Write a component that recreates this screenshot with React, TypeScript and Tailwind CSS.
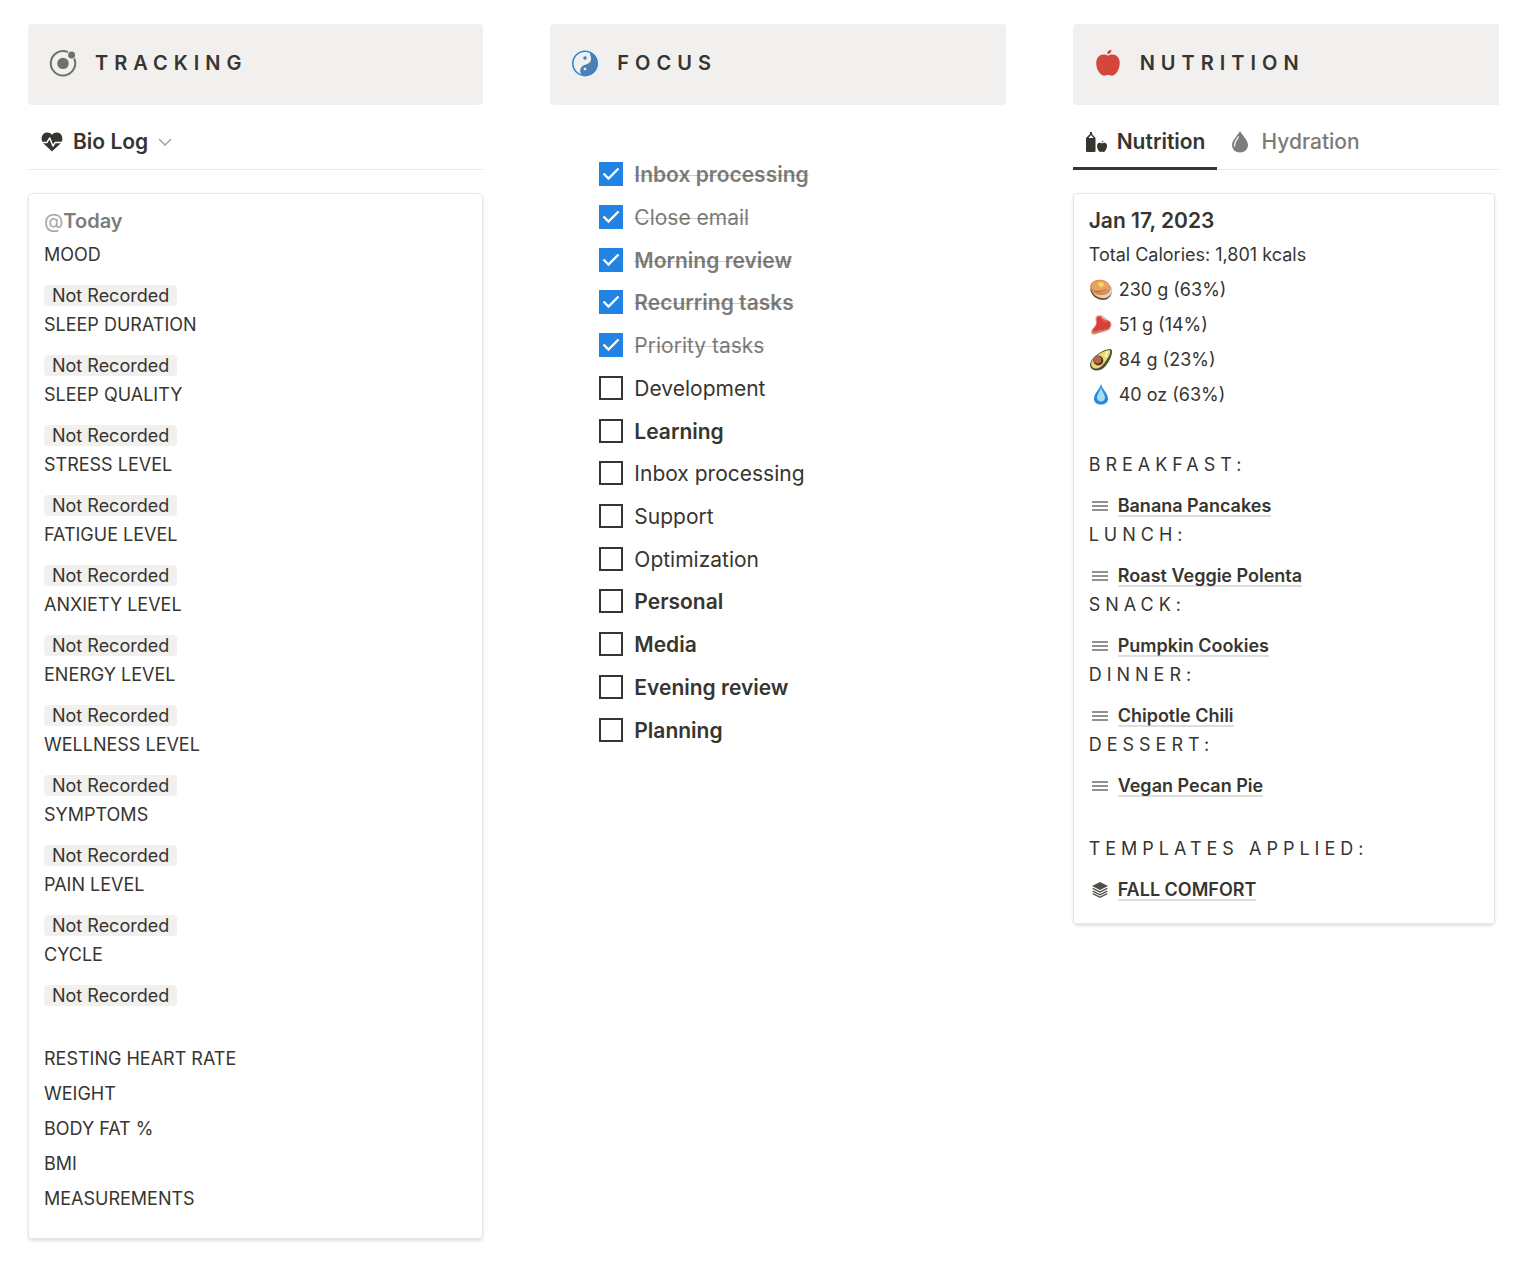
import { useState } from 'react'
import type { ReactNode } from 'react'
import { clsx } from 'clsx'

const METRICS = [
  'MOOD',
  'SLEEP DURATION',
  'SLEEP QUALITY',
  'STRESS LEVEL',
  'FATIGUE LEVEL',
  'ANXIETY LEVEL',
  'ENERGY LEVEL',
  'WELLNESS LEVEL',
  'SYMPTOMS',
  'PAIN LEVEL',
  'CYCLE',
]

const BODY_STATS = ['RESTING HEART RATE', 'WEIGHT', 'BODY FAT %', 'BMI', 'MEASUREMENTS']

const INITIAL_TASKS = [
  { label: 'Inbox processing', bold: true, done: true },
  { label: 'Close email', bold: false, done: true },
  { label: 'Morning review', bold: true, done: true },
  { label: 'Recurring tasks', bold: true, done: true },
  { label: 'Priority tasks', bold: false, done: true },
  { label: 'Development', bold: false, done: false },
  { label: 'Learning', bold: true, done: false },
  { label: 'Inbox processing', bold: false, done: false },
  { label: 'Support', bold: false, done: false },
  { label: 'Optimization', bold: false, done: false },
  { label: 'Personal', bold: true, done: false },
  { label: 'Media', bold: true, done: false },
  { label: 'Evening review', bold: true, done: false },
  { label: 'Planning', bold: true, done: false },
]

const MEALS = [
  { name: 'BREAKFAST:', recipe: 'Banana Pancakes' },
  { name: 'LUNCH:', recipe: 'Roast Veggie Polenta' },
  { name: 'SNACK:', recipe: 'Pumpkin Cookies' },
  { name: 'DINNER:', recipe: 'Chipotle Chili' },
  { name: 'DESSERT:', recipe: 'Vegan Pecan Pie' },
]

function OrbitIcon() {
  return (
    <svg viewBox="0 0 28 28" className="size-7" aria-hidden="true">
      <path d="M19 3.2A12.2 12.2 0 1 0 25.2 9.5" fill="none" stroke="#6f6f6b" strokeWidth="2" />
      <circle cx="14" cy="14.4" r="5.7" fill="#6f6f6b" />
      <circle cx="22.6" cy="6" r="3.5" fill="#6f6f6b" />
    </svg>
  )
}

function YinYangIcon() {
  return (
    <svg viewBox="0 0 28 28" className="size-7" aria-hidden="true">
      <circle cx="14" cy="14.4" r="12.2" fill="#f1f0ef" />
      <path d="M19 2.8A12.6 12.6 0 0 1 14 27C8.5 26.5 8 20.5 11 17.5C13.5 15 19.5 15.5 20 10.5C20.3 7.5 18.5 5.5 19 2.8Z" fill="#4f7fad" />
      <circle cx="14" cy="14.4" r="12.2" fill="none" stroke="#2b87dd" strokeWidth="1.6" />
      <circle cx="14" cy="9" r="1.8" fill="#2b87dd" />
      <circle cx="14" cy="20" r="1.9" fill="#f1f0ef" stroke="#2b87dd" />
    </svg>
  )
}

function AppleIcon() {
  return (
    <svg viewBox="0 0 28 28" className="size-7" aria-hidden="true">
      <path d="M14 6.8C16.5 5 21.5 5 24 8.2C27 12 25.8 19 23 23.3C20.8 26.6 18 27.2 16 26.3Q14 25.7 12 26.3C10 27.2 7.2 26.6 5 23.3C2.2 19 1 12 4 8.2C6.5 5 11.5 5 14 6.8Z" fill="#d5473d" />
      <path d="M13.3 5.2C13 2.5 14.5 1 17.3 0.8C17.5 3.5 16 5 13.3 5.2Z" fill="#d5473d" />
    </svg>
  )
}

function HeartPulseIcon() {
  return (
    <svg viewBox="0 0 24 22" className="h-5 w-[22px]" aria-hidden="true">
      <path d="M12 3C9.5 0 5 0 2.5 2.3C0 5 0 9 2 12L12 21.5L22 12C24 9 24 5 21.5 2.3C19 0 14.5 0 12 3Z" fill="#37352f" />
      <path d="M0 11.5H6.5L9.5 6.5L13 15.5L15.5 11.5H24" fill="none" stroke="#fff" strokeWidth="1.6" strokeLinejoin="round" />
    </svg>
  )
}

function GroceriesIcon() {
  return (
    <svg viewBox="0 0 22 22" className="size-[22px]" aria-hidden="true">
      <path d="M5 1H7V3L10.5 7V20Q10.5 21 9.5 21H2Q1 21 1 20V7L5 3Z" fill="#37352f" />
      <path d="M6 4L8.5 7H3.5Z" fill="#fff" />
      <path d="M17 12.4C18.5 11.4 20.5 11.5 21.6 13C22.6 15 21.5 18.5 20 20.3C19 21.4 18 20.8 17 20.8S15 21.4 14 20.3C12.5 18.5 11.5 15 12.5 13C13.5 11.5 15.5 11.4 17 12.4Z" fill="#37352f" />
      <path d="M16.6 11.6Q16.6 9.8 18.6 9.5Q18.5 11.5 16.6 11.6Z" fill="#37352f" />
    </svg>
  )
}

function DropIcon() {
  return (
    <svg viewBox="0 0 22 22" className="size-[22px]" aria-hidden="true">
      <path d="M11 0C13 4 19 9 19 14C19 18.5 15.5 21.5 11 21.5S3 18.5 3 14C3 9 9 4 11 0Z" fill="#7d7c78" />
      <path d="M9.3 6C7 9.5 5.3 11.5 5.5 15" fill="none" stroke="#e8e8e6" strokeWidth="1.5" strokeLinecap="round" />
    </svg>
  )
}

function PancakesIcon() {
  return (
    <svg viewBox="0 0 24 24" className="size-6" aria-hidden="true">
      <path d="M1 11C2.5 18 8 22 14 22C20 22 23.5 17 23 11L12 8Z" fill="#6d4a37" />
      <path d="M1.5 10C4 17 9 20.5 15 20.2C20 20 23.5 15 22.8 9Z" fill="#e8c9a0" />
      <path d="M9 18C15 20.5 22 15.5 22.8 9.5L23 14C21 19 15 21 9 18Z" fill="#d5d8dc" />
      <ellipse cx="11.3" cy="9.4" rx="10.3" ry="7.6" transform="rotate(8 11.3 9.4)" fill="#d98a4c" />
      <ellipse cx="11.5" cy="8.4" rx="9" ry="5.8" transform="rotate(8 11.5 8.4)" fill="#e5a466" />
      <path d="M8.5 5L13.5 4L15.5 7.5L11 9.2Z" fill="#f7d968" />
      <path d="M6 13Q11 14.5 17 11.5" fill="none" stroke="#bd6b35" strokeWidth="1.3" />
    </svg>
  )
}

function MeatIcon() {
  return (
    <svg viewBox="0 0 24 24" className="size-6" aria-hidden="true">
      <path d="M2 19C2 16 6 14 7 10C6 6 6 4 7.5 2.5L12.5 2L22 9C23.5 13 22 16 18 18C13 20 8 20 5.5 22C3 22 2 21 2 19Z" fill="#efb3a1" />
      <path d="M3.5 16.5C6.5 14 8.5 11 7.5 7C7 4 9 2.7 12 3.5C13.5 5 15 7 18 7.5C21.5 8 23 12 20.5 14.5C17 17.5 11 16.5 7.5 18.5C4.5 19.5 3 18 3.5 16.5Z" fill="#d63f3a" />
      <path d="M3 19Q5 20.5 8 19.5Q15 17 20.5 15.5" fill="none" stroke="#a86b54" strokeWidth="1.2" />
      <path d="M12 4Q13 8 18 9" fill="none" stroke="#eb7770" strokeWidth="1" />
    </svg>
  )
}

function AvocadoIcon() {
  return (
    <svg viewBox="0 0 24 24" className="size-6" aria-hidden="true">
      <path d="M21 1C24 1 23.5 6 21 11C18 17 14 23 7 22.5C2 22 0 18 1.5 14.5C4 8 13 2 21 1Z" fill="#4b5432" />
      <path d="M20.5 2C22.5 2.5 20.5 8 17.5 12C14.5 16.5 11 21 6.5 20.5C3 20 1.5 17.5 2.5 14C4.5 8.5 13.5 3 20.5 2Z" fill="#ead979" />
      <path d="M18.5 3.5Q15 9 18.5 8" fill="none" stroke="#f8f1b8" strokeWidth="2" />
      <circle cx="9.3" cy="12.5" r="5" fill="#583226" />
      <circle cx="8.6" cy="11.8" r="3.8" fill="#b56b43" />
    </svg>
  )
}

function WaterIcon() {
  return (
    <svg viewBox="0 0 24 24" className="size-6" aria-hidden="true">
      <path d="M12 1C13 6 19 10.5 19 15.5C19 19.5 16 21.5 12 21.5S5 19.500 5 15.500C5 10.500 11 6 12 1Z" fill="#268ae0" />
      <path d="M12 4C12.5 8 16 11 16 14.500C16 17 14 18.500 12 18.500S8 17 8 14.500C8 11 11.500 8 12 4Z" fill="#a9dcf7" />
    </svg>
  )
}

function LinesIcon() {
  return (
    <svg viewBox="0 0 16 10" className="h-2.5 w-4" aria-hidden="true">
      <path d="M0 1H16M0 5H16M0 9H16" stroke="#6f6e6a" strokeWidth="1.4" />
    </svg>
  )
}

function LayersIcon() {
  return (
    <svg viewBox="0 0 16 16" className="size-4" aria-hidden="true">
      <path d="M8 0L16 4L8 8L0 4Z" fill="#504e49" />
      <path d="M0 6.7L1.5 6L8 9.3L14.5 6L16 6.7L8 10.8ZM0 9.5L1.5 8.8L8 12L14.5 8.8L16 9.5L8 13.5ZM0 12L1.5 11.3L8 14.5L14.5 11.3L16 12L8 16Z" fill="#504e49" />
    </svg>
  )
}

const MACROS = [
  { icon: <PancakesIcon />, text: '230 g (63%)' },
  { icon: <MeatIcon />, text: '51 g (14%)' },
  { icon: <AvocadoIcon />, text: '84 g (23%)' },
  { icon: <WaterIcon />, text: '40 oz (63%)' },
]

function ColumnHeader({ icon, title, className }: { icon: ReactNode; title: string; className?: string }) {
  return (
    <header className={clsx('flex h-[81px] items-center gap-[18px] bg-[#f1f0ef] px-[21px] pb-1', className)}>
      {icon}
      <h2 className="text-[20px] leading-7 font-semibold tracking-[6px]">{title}</h2>
    </header>
  )
}

function RecipeLink({ icon, children }: { icon: ReactNode; children: ReactNode }) {
  return (
    <div className="mt-[13px] flex h-[29px] items-center gap-2.5 pb-px pl-[3px]">
      {icon}
      <a href="#" className="border-b-2 border-[#dededc] pt-0.5 leading-[18px] font-semibold">
        {children}
      </a>
    </div>
  )
}

function Tracking() {
  return (
    <section>
      <ColumnHeader icon={<OrbitIcon />} title="TRACKING" className="rounded" />
      <div className="mt-2 flex h-[57px] items-center border-b border-[#e9e9e7] px-[13px] pt-0.5">
        <button type="button" className="flex items-center gap-2.5 text-[21px] leading-7 font-semibold">
          <HeartPulseIcon />
          Bio Log
          <svg viewBox="0 0 14 8" className="h-2 w-3.5" aria-hidden="true">
            <path d="M1 1L7 7L13 1" fill="none" stroke="#a5a4a1" strokeWidth="1.6" />
          </svg>
        </button>
      </div>
      <div className="mt-[23px] rounded border border-[#e6e6e5] px-[15px] pt-2 pb-[25px] shadow-[0_2px_3px_rgba(15,15,15,0.12)]">
        <h3 className="h-[39px] text-[20px] leading-[38px] font-semibold text-[#7d7c78]">
          <span className="font-normal text-[#a9a8a5]">@</span>Today
        </h3>
        <dl>
          {METRICS.map((metric) => (
            <div key={metric}>
              <dt>{metric}</dt>
              <dd className="mt-3 flex h-[30px] items-center pb-0.5">
                <span className="rounded bg-[#f1f0ef] px-2 leading-[21px]">Not Recorded</span>
              </dd>
            </div>
          ))}
        </dl>
        <ul className="mt-[34px] flex flex-col gap-[7px]">
          {BODY_STATS.map((stat) => (
            <li key={stat}>{stat}</li>
          ))}
        </ul>
      </div>
    </section>
  )
}

function Focus() {
  const [tasks, setTasks] = useState(INITIAL_TASKS)

  const toggle = (index: number) => {
    setTasks(tasks.map((task, i) => (i === index ? { ...task, done: !task.done } : task)))
  }

  return (
    <section>
      <ColumnHeader icon={<YinYangIcon />} title="FOCUS" className="rounded" />
      <ul className="mt-12 grid h-[598px] auto-rows-fr pl-[49px]">
        {tasks.map((task, i) => (
          <li key={i} className="flex items-center">
            <label className="flex items-center gap-[11px] text-[21px] leading-7">
              <span className="grid size-6 place-items-center">
                <input
                  type="checkbox"
                  checked={task.done}
                  onChange={() => toggle(i)}
                  className="col-start-1 row-start-1 size-6 appearance-none border-2 border-[#37352f] checked:border-[#2383e2] checked:bg-[#2383e2]"
                />
                {task.done && (
                  <svg viewBox="0 0 18 14" className="pointer-events-none col-start-1 row-start-1 h-3.5 w-[18px]" aria-hidden="true">
                    <path d="M1.5 6.5L6.5 11.5L16.5 1.5" fill="none" stroke="#fff" strokeWidth="2.4" />
                  </svg>
                )}
              </span>
              <span
                className={clsx(
                  'pt-0.5',
                  task.bold && 'font-semibold',
                  task.done && 'text-[#7d7c78] line-through decoration-[#37352f]/25 decoration-1',
                )}
              >
                {task.label}
              </span>
            </label>
          </li>
        ))}
      </ul>
    </section>
  )
}

function Nutrition() {
  const [tab, setTab] = useState('Nutrition')
  const tabs = [
    { name: 'Nutrition', icon: <GroceriesIcon /> },
    { name: 'Hydration', icon: <DropIcon /> },
  ]

  return (
    <section>
      <ColumnHeader icon={<AppleIcon />} title="NUTRITION" className="rounded-l" />
      <div role="tablist" className="mt-2 flex h-[57px] border-b border-[#e9e9e7]">
        {tabs.map(({ name, icon }) => (
          <button
            key={name}
            type="button"
            role="tab"
            aria-selected={tab === name}
            onClick={() => setTab(name)}
            className={clsx(
              '-mb-px flex items-center gap-2.5 border-b-3 px-3 pt-[3px] text-[21px] leading-7',
              tab === name ? 'border-[#37352f] font-semibold' : 'border-transparent font-medium text-[#7d7c78]',
            )}
          >
            {icon}
            {name}
          </button>
        ))}
      </div>
      <div className="mt-[23px] mr-1 rounded border border-[#e6e6e5] px-[15px] pt-2 pb-[18px] shadow-[0_2px_3px_rgba(15,15,15,0.12)]">
        <h3 className="h-[39px] text-[21px] leading-[38px] font-semibold">Jan 17, 2023</h3>
        <p>Total Calories: 1,801 kcals</p>
        <ul className="mt-[7px] flex flex-col gap-[7px]">
          {MACROS.map(({ icon, text }) => (
            <li key={text} className="flex items-center gap-1.5">
              {icon}
              {text}
            </li>
          ))}
        </ul>
        <div className="mt-[42px]">
          {MEALS.map(({ name, recipe }) => (
            <div key={name}>
              <h4 className="tracking-[5px]">{name}</h4>
              <RecipeLink icon={<LinesIcon />}>{recipe}</RecipeLink>
            </div>
          ))}
        </div>
        <div className="mt-[34px]">
          <h4 className="tracking-[5px]">TEMPLATES APPLIED:</h4>
          <RecipeLink icon={<LayersIcon />}>FALL COMFORT</RecipeLink>
        </div>
      </div>
    </section>
  )
}

export default function App() {
  return (
    <main className="grid min-h-screen grid-cols-[455fr_455fr_426fr] items-start gap-x-[67px] bg-white pt-6 pr-[37px] pb-8 pl-7 font-['Inter','Liberation_Sans',sans-serif] text-[18px] leading-7 text-[#37352f]">
      <Tracking />
      <Focus />
      <Nutrition />
    </main>
  )
}
